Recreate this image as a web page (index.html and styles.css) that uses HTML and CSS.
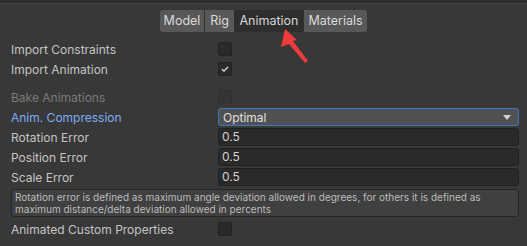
FILE: index.html
```html
<!DOCTYPE html>
<html>
<head>
<meta charset="utf-8">
<link rel="stylesheet" href="styles.css">
</head>
<body>
<div class="page">
  <div class="topbar"></div>
  <div class="tabs">
    <div class="tab t-model">Model</div>
    <div class="tab t-rig">Rig</div>
    <div class="tab t-anim active">Animation</div>
    <div class="tab t-mat">Materials</div>
  </div>
  <div class="rows">
    <div class="row"><span class="label">Import Constraints</span><span class="check"></span></div>
    <div class="row"><span class="label">Import Animation</span><span class="check"><svg viewBox="0 0 14 14" width="14" height="14"><path d="M3.5 7.3 L5.8 9.5 L10.5 4.5" fill="none" stroke="#e6e6e6" stroke-width="1.6"/></svg></span></div>
    <div class="row gap"><span class="label dim">Bake Animations</span><span class="check dimcheck"></span></div>
    <div class="row"><span class="label blue">Anim. Compression</span><span class="dropdown">Optimal<svg class="caret" viewBox="0 0 8 5" width="8" height="5"><path d="M0 0 H8 L4 5 Z" fill="#d0d0d0"/></svg></span></div>
    <div class="row"><span class="label">Rotation Error</span><span class="field">0.5</span></div>
    <div class="row"><span class="label">Position Error</span><span class="field">0.5</span></div>
    <div class="row"><span class="label">Scale Error</span><span class="field">0.5</span></div>
    <div class="help">Rotation error is defined as maximum angle deviation allowed in degrees, for others it is defined as maximum distance/delta deviation allowed in percents</div>
    <div class="row last"><span class="label">Animated Custom Properties</span><span class="check"></span></div>
  </div>
  <svg class="arrow" viewBox="0 0 30 40" width="30" height="40">
    <polygon points="5,2 17,13 13,14 28,34 25,36 9,17 1,20" fill="#ee3b3b"/>
  </svg>
</div>
</body>
</html>
```
FILE: styles.css
```css
html, body {
  margin: 0;
  padding: 0;
  background: #383838;
}
.page {
  position: relative;
  width: 527px;
  height: 246px;
  overflow: hidden;
  font-family: Inter, "Noto Sans", sans-serif;
  font-size: 12px;
  color: #c4c4c4;
}
.topbar {
  height: 3px;
  background: #2e2e2e;
  border-bottom: 1px solid #444444;
}
.tabs {
  display: flex;
  justify-content: center;
  margin-top: 6px;
  height: 22px;
}
.tab {
  box-sizing: border-box;
  height: 22px;
  line-height: 21px;
  background: #585858;
  color: #dadada;
  text-align: center;
  font-size: 12.5px;
  border-right: 1px solid #303030;
}
.t-model { width: 45px; border-radius: 3px 0 0 3px; }
.t-rig { width: 30px; }
.t-anim { width: 69px; }
.t-mat { width: 63px; border-right: none; border-radius: 0 3px 3px 0; }
.tab.active {
  background: #2e2e2e;
  color: #d6d6d6;
}
.rows {
  display: flex;
  flex-direction: column;
  margin-top: 7px;
  padding-right: 8px;
}
.row {
  display: flex;
  align-items: center;
  height: 20px;
}
.row.gap { margin-top: 8px; }
.row.last { margin-top: 2px; }
.label {
  width: 207px;
  padding-left: 11px;
  flex: none;
}
.label.dim { color: #7a7a7a; }
.label.blue { color: #7cacf3; }
.check {
  box-sizing: border-box;
  width: 14px;
  height: 14px;
  background: #2a2a2a;
  border: 1px solid #222222;
  border-radius: 2px;
  display: flex;
  align-items: center;
  justify-content: center;
}
.check svg { display: block; }
.dimcheck { background: #353535; border-color: #303030; }
.dropdown {
  box-sizing: border-box;
  flex: 1;
  height: 18px;
  display: flex;
  align-items: center;
  justify-content: space-between;
  padding: 0 7px 0 4px;
  background: #515151;
  border: 1px solid #3a79bb;
  border-radius: 3px;
  color: #e0e0e0;
}
.caret { display: block; }
.field {
  box-sizing: border-box;
  flex: 1;
  height: 18px;
  line-height: 16px;
  padding-left: 3px;
  background: #2a2a2a;
  border: 1px solid #212121;
  border-radius: 3px;
  color: #d2d2d2;
}
.help {
  box-sizing: border-box;
  margin: 2px 0 0 11px;
  height: 28px;
  padding: 1px 4px 0 3px;
  background: #404040;
  border: 1px solid #262626;
  border-radius: 3px;
  font-size: 10px;
  line-height: 12px;
  color: #bdbdbd;
}
.arrow {
  position: absolute;
  left: 280px;
  top: 27px;
}
```
